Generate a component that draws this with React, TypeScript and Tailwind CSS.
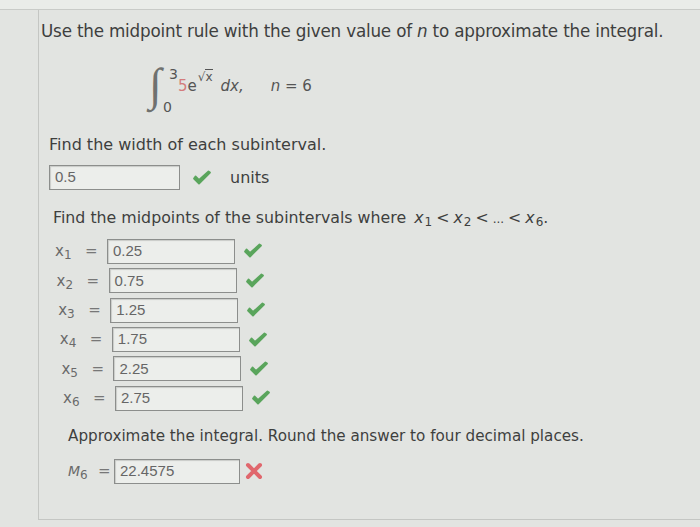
import React from "react";

const Check = () => (
  <svg width="20" height="16" viewBox="0 0 20 16" className="shrink-0">
    <path d="M2 8.5 L7 13.5 L18 2.5 L16.5 1.5 L7 10 L3.5 6.5 Z" fill="#5aa55c" stroke="#5aa55c" strokeWidth="1.8" strokeLinejoin="round" />
  </svg>
);

const Cross = () => (
  <svg width="18" height="18" viewBox="0 0 18 18" className="shrink-0">
    <path d="M3 3 L15 15 M15 3 L3 15" stroke="#e0676d" strokeWidth="4" strokeLinecap="round" />
  </svg>
);

const Box = ({ v, w = "w-[128px]" }: { v: string; w?: string }) => (
  <div className={`${w} h-[25px] border border-[#8c8e8c] bg-[#eceeeb] flex items-center pl-[5px] text-[15px] text-[#666] shadow-[inset_1px_1px_1px_rgba(0,0,0,0.15)]`} style={{ fontFamily: '"Liberation Sans", Arial, sans-serif' }}>
    {v}
  </div>
);

const rows = ["0.25", "0.75", "1.25", "1.75", "2.25", "2.75"];

const Sub = ({ c }: { c: string }) => (
  <sub className="text-[12px] ml-[1px] not-italic">{c}</sub>
);

export default function App() {
  return (
    <div className="w-[700px] h-[527px] bg-[#e2e4e1] overflow-hidden relative" style={{ fontFamily: '"DejaVu Sans", Verdana, sans-serif' }}>
      <div className="h-[10px] bg-[#eaece9] border-b border-[#c9cbc8]" />
      <div className="ml-[38px] h-[510px] border-l border-b border-[#c4c6c3] text-[#3e3f3e]">
        <div className="pt-[9px] pl-[2px] text-[16.8px] tracking-[-0.2px]">
          Use the midpoint rule with the given value of <i>n</i> to approximate the integral.
        </div>
        {/* integral */}
        <div className="flex items-center mt-[8px] ml-[110px] h-[60px]">
          <div className="relative w-[29px] h-[60px] shrink-0">
            <span className="absolute left-[0px] top-[10px] text-[46px] leading-none text-[#6f716f]" style={{ fontFamily: '"Liberation Serif", serif' }}>∫</span>
            <span className="absolute left-[20px] top-[15px] text-[14px] leading-none text-[#555]">3</span>
            <span className="absolute left-[14px] top-[48px] text-[14px] leading-none text-[#555]">0</span>
          </div>
          <span className="text-[15px] text-[#d47c7c] mt-[8px]">5</span>
          <span className="text-[15px] text-[#555] mt-[8px]">e</span>
          <span className="text-[12px] text-[#555] -mt-[10px] ml-[1px]">√<span className="border-t border-[#555]">x</span></span>
          <span className="text-[15px] text-[#555] mt-[8px] ml-[8px] italic">dx,</span>
          <span className="text-[15px] text-[#555] mt-[8px] ml-[27px]"><i>n</i> = 6</span>
        </div>

        <div className="mt-[21px] ml-[10px] text-[16px]">Find the width of each subinterval.</div>
        <div className="flex items-center mt-[8px] ml-[10px]">
          <Box v="0.5" w="w-[131px]" />
          <div className="ml-[12px]"><Check /></div>
          <span className="ml-[18px] text-[16px]">units</span>
        </div>

        <div className="mt-[16px] ml-[14px] text-[15.8px]">
          Find the midpoints of the subintervals where <i className="ml-[3px]">x</i><Sub c="1" />
          <span className="mx-[4px]">&lt;</span><i>x</i><Sub c="2" />
          <span className="mx-[4px]">&lt;</span><span className="text-[12px]">...</span>
          <span className="mx-[4px]">&lt;</span><i>x</i><Sub c="6" />.
        </div>

        <div className="mt-[9px] flex flex-col gap-[4.4px]">
          {rows.map((r, i) => (
            <div key={i} className="flex items-center h-[25px]" style={{ marginLeft: 16 + i * 1.6 }}>
              <span className="w-[30px] text-[15px] text-[#6a6a6a]">x<sub className="text-[12px]">{i + 1}</sub></span>
              <span className="w-[22px] text-[15px] text-[#777]">=</span>
              <Box v={r} />
              <div className="ml-[8px]"><Check /></div>
            </div>
          ))}
        </div>

        <div className="mt-[14px] ml-[29px] text-[15.2px]">Approximate the integral. Round the answer to four decimal places.</div>
        <div className="flex items-center mt-[11px] ml-[29px]">
          <span className="w-[30px] text-[14px] text-[#6a6a6a] italic">M<sub className="text-[12px] not-italic">6</sub></span>
          <span className="w-[16px] text-[15px] text-[#777]">=</span>
          <Box v="22.4575" w="w-[126px]" />
          <div className="ml-[5px]"><Cross /></div>
        </div>
      </div>
    </div>
  );
}
